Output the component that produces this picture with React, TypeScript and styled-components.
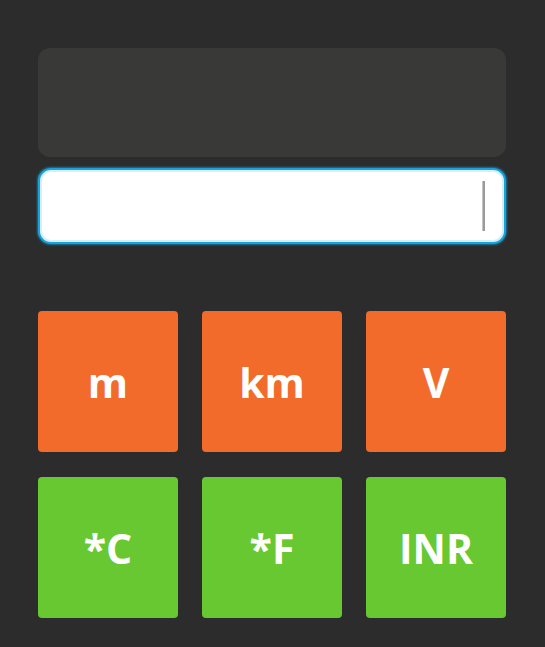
import React from 'react';
import styled, { createGlobalStyle } from 'styled-components';

const GlobalStyle = createGlobalStyle`
  html, body {
    margin: 0;
    padding: 0;
    background: #2c2c2c;
  }
  body {
    font-family: 'Open Sans', 'Noto Sans', sans-serif;
  }
`;

const Page = styled.div`
  width: 545px;
  height: 647px;
  box-sizing: border-box;
  padding: 48px 39px 0 38px;
  display: flex;
  flex-direction: column;
`;

const Display = styled.div`
  height: 109px;
  border-radius: 12px;
  background: #393a37;
`;

const InputBox = styled.div`
  margin-top: 11px;
  height: 76px;
  box-sizing: border-box;
  border-radius: 13px;
  background: #ffffff;
  border: 2px solid #17a3dc;
  box-shadow: 0 0 2px 1px rgba(23, 163, 220, 0.6), inset 0 0 0 2px #d6effa;
  display: flex;
  align-items: center;
  justify-content: flex-end;
  padding-right: 19px;
`;

const Caret = styled.span`
  width: 3px;
  height: 50px;
  background: #9a9a9a;
  box-shadow: inset 1px 0 0 #c4c4c4;
`;

const Keypad = styled.div`
  margin-top: 67px;
  display: grid;
  grid-template-columns: repeat(3, 140px);
  grid-auto-rows: 141px;
  column-gap: 24px;
  row-gap: 25px;
`;

const Key = styled.button<{ $tone: 'orange' | 'green' }>`
  border: none;
  border-radius: 4px;
  background: ${(p) => (p.$tone === 'orange' ? '#f26b2b' : '#68c832')};
  color: #ffffff;
  font-family: 'Open Sans', 'Noto Sans', sans-serif;
  font-weight: 700;
  font-size: 41px;
  display: flex;
  align-items: center;
  justify-content: center;
  padding: 0;
`;

const keys: { label: string; tone: 'orange' | 'green' }[] = [
  { label: 'm', tone: 'orange' },
  { label: 'km', tone: 'orange' },
  { label: 'V', tone: 'orange' },
  { label: '*C', tone: 'green' },
  { label: '*F', tone: 'green' },
  { label: 'INR', tone: 'green' },
];

export default function App() {
  return (
    <>
      <GlobalStyle />
      <Page>
        <Display />
        <InputBox>
          <Caret />
        </InputBox>
        <Keypad>
          {keys.map((k) => (
            <Key key={k.label} $tone={k.tone}>
              {k.label}
            </Key>
          ))}
        </Keypad>
      </Page>
    </>
  );
}
